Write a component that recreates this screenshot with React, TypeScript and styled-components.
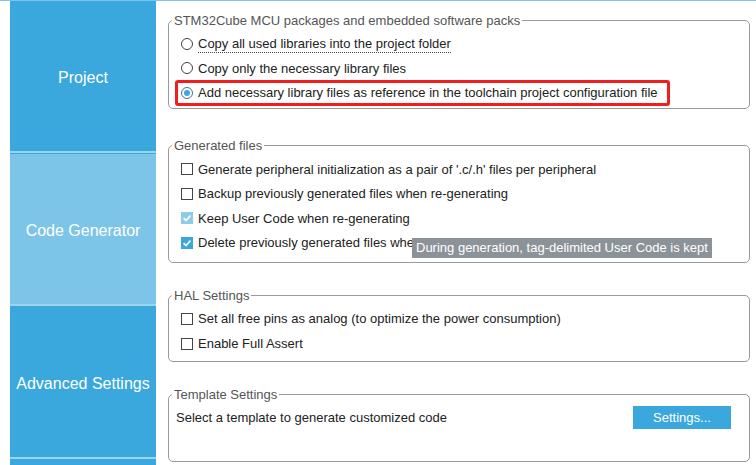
import React from 'react';
import styled, { createGlobalStyle, css } from 'styled-components';

const GlobalStyle = createGlobalStyle`
  html, body {
    margin: 0;
    padding: 0;
    background: #ffffff;
  }
  body {
    font-family: "Liberation Sans", Arial, sans-serif;
    font-size: 13px;
    color: #222;
  }
`;

const Page = styled.div`
  display: flex;
  width: 756px;
  height: 465px;
  box-sizing: border-box;
  border-top: 1px solid #7dc4e8;
  overflow: hidden;
`;

const Sidebar = styled.nav`
  display: flex;
  flex-direction: column;
  gap: 1px;
  width: 146px;
  margin-left: 10px;
  background: #3aa8dc;
`;

const Tab = styled.div<{ $active?: boolean }>`
  flex: none;
  height: 147px;
  padding-top: 3px;
  display: flex;
  align-items: center;
  justify-content: center;
  background: ${p => (p.$active ? '#7dc5e8' : '#3aa8dc')};
  border-bottom: 2px solid #9fd4ef;
  color: #ffffff;
  font-size: 16px;
`;

const Main = styled.main`
  flex: 1;
  display: flex;
  flex-direction: column;
  margin: 0 6px 0 12px;
  padding-top: 11.5px;
`;

const Group = styled.fieldset<{ $mt?: number; $pb: number }>`
  margin: ${p => p.$mt ?? 0}px 0 0;
  padding: 4px 0 ${p => p.$pb}px;
  border: 1px solid #9a9a9a;
  border-radius: 5px;
  min-width: 0;
`;

const Legend = styled.legend`
  margin-left: 3px;
  padding: 0 2px;
  font-size: 13px;
  line-height: 15px;
  color: #555;
`;

const Row = styled.label<{ $highlight?: boolean }>`
  position: relative;
  display: flex;
  align-items: center;
  gap: 5px;
  width: fit-content;
  height: 24.6px;
  margin-left: 12px;
  color: #222;
  font-size: 13px;
  line-height: 15px;
  white-space: nowrap;

  ${p =>
    p.$highlight &&
    css`
      &::after {
        content: '';
        position: absolute;
        top: -0.5px;
        bottom: -1px;
        left: -6px;
        right: -12px;
        border: 3px solid #f01e1e;
        border-radius: 3px;
      }
    `}
`;

const RowText = styled.span<{ $focused?: boolean }>`
  ${p =>
    p.$focused &&
    css`
      padding-bottom: 1px;
      border-bottom: 1px dotted #444;
      margin-bottom: -2px;
    `}
`;

const RadioCircle = styled.span<{ $checked?: boolean }>`
  flex: none;
  display: flex;
  align-items: center;
  justify-content: center;
  width: 12px;
  height: 12px;
  box-sizing: border-box;
  border-radius: 50%;
  border: 1px solid ${p => (p.$checked ? '#4f6f86' : '#444')};
  background: #fff;

  &::after {
    content: '';
    display: ${p => (p.$checked ? 'block' : 'none')};
    width: 6px;
    height: 6px;
    border-radius: 50%;
    background: #3aa8dc;
  }
`;

const Box = styled.span<{ $state: 'off' | 'on' | 'disabled' }>`
  flex: none;
  display: flex;
  align-items: center;
  justify-content: center;
  width: 12px;
  height: 12px;
  box-sizing: border-box;
  border: 1px solid
    ${p => (p.$state === 'off' ? '#444' : p.$state === 'on' ? '#3aa8dc' : '#8ccbea')};
  background: ${p => (p.$state === 'off' ? '#fff' : p.$state === 'on' ? '#3aa8dc' : '#8ccbea')};
`;

// hover tooltip, drawn over the rest of its row's label as in the screenshot
const Tooltip = styled.span`
  position: absolute;
  left: 231px;
  top: 7.7px;
  height: 20px;
  padding: 0 4px;
  background: #8c9398;
  color: #ffffff;
  font-size: 13px;
  line-height: 20px;
  white-space: nowrap;
`;

const TemplateRow = styled.div`
  display: flex;
  align-items: center;
  justify-content: space-between;
  padding: 0 18px 0 7px;
  color: #222;
`;

const Button = styled.button`
  width: 98px;
  height: 23px;
  border: none;
  background: #3aa8dc;
  color: #ffffff;
  font-family: "Liberation Sans", Arial, sans-serif;
  font-size: 13px;
  padding: 0;
`;

const Check = () => (
  <svg width="10" height="10" viewBox="0 0 10 10">
    <path d="M1.6 5.2 L4 7.5 L8.4 2.6" fill="none" stroke="#fff" strokeWidth="1.6" />
  </svg>
);

const Radio: React.FC<{ checked?: boolean; focused?: boolean; highlight?: boolean; children: React.ReactNode }> = ({
  checked,
  focused,
  highlight,
  children,
}) => (
  <Row $highlight={highlight}>
    <RadioCircle $checked={checked} />
    <RowText $focused={focused}>{children}</RowText>
  </Row>
);

const CheckRow: React.FC<{ state: 'off' | 'on' | 'disabled'; children: React.ReactNode; tip?: string }> = ({
  state,
  children,
  tip,
}) => (
  <Row>
    <Box $state={state}>{state !== 'off' && <Check />}</Box>
    <RowText>{children}</RowText>
    {tip && <Tooltip>{tip}</Tooltip>}
  </Row>
);

export default function App() {
  return (
    <>
      <GlobalStyle />
      <Page>
        <Sidebar>
          <Tab>Project</Tab>
          <Tab $active>Code Generator</Tab>
          <Tab>Advanced Settings</Tab>
        </Sidebar>
        <Main>
          <Group $pb={3}>
            <Legend>STM32Cube MCU packages and embedded software packs</Legend>
            <Radio focused>Copy all used libraries into the project folder</Radio>
            <Radio>Copy only the necessary library files</Radio>
            <Radio checked highlight>
              Add necessary library files as reference in the toolchain project configuration file
            </Radio>
          </Group>

          <Group $mt={28.5} $pb={7}>
            <Legend>Generated files</Legend>
            <CheckRow state="off">Generate peripheral initialization as a pair of '.c/.h' files per peripheral</CheckRow>
            <CheckRow state="off">Backup previously generated files when re-generating</CheckRow>
            <CheckRow state="disabled">Keep User Code when re-generating</CheckRow>
            <CheckRow state="on" tip="During generation, tag-delimited User Code is kept">
              Delete previously generated files when not re-generated
            </CheckRow>
          </Group>

          <Group $mt={24.5} $pb={5}>
            <Legend>HAL Settings</Legend>
            <CheckRow state="off">Set all free pins as analog (to optimize the power consumption)</CheckRow>
            <CheckRow state="off">Enable Full Assert</CheckRow>
          </Group>

          <Group $mt={25.5} $pb={32}>
            <Legend>Template Settings</Legend>
            <TemplateRow>
              <span>Select a template to generate customized code</span>
              <Button>Settings...</Button>
            </TemplateRow>
          </Group>
        </Main>
      </Page>
    </>
  );
}
